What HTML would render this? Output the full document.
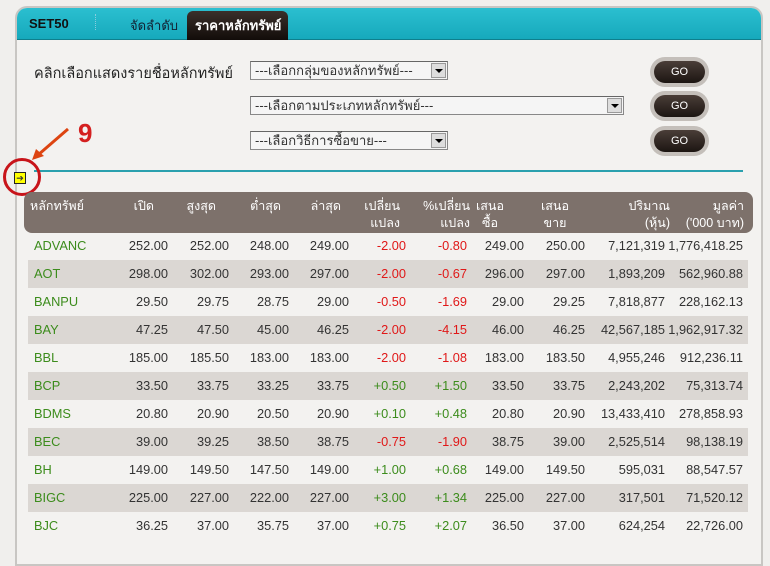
<!DOCTYPE html>
<html><head><meta charset="utf-8"><style>
*{margin:0;padding:0;box-sizing:border-box}
body{width:770px;height:543px;overflow:hidden;background:#f0efed;font-family:"Liberation Sans","Noto Sans CJK SC",sans-serif;position:relative;color:#333}
.panel{position:absolute;left:15px;top:6px;width:748px;height:560px;border:2px solid #c8c6c3;border-radius:12px 12px 0 0;background:#f3f2f0}
.hdr{position:absolute;left:17px;top:8px;width:744px;height:32px;background:linear-gradient(#2bbfd0,#16a9bc);border-radius:10px 10px 0 0;border-bottom:1px solid #0e7f8d}
.t{position:absolute;font-size:13px}
.sel{position:absolute;height:19px;border:1px solid #888;border-top-color:#666;background:#f5f5f5;font-size:13px;line-height:16px;color:#333;padding:1px 0 0 4px}
.sel i{position:absolute;right:1px;top:1px;width:15px;height:15px;background:#ddd;border:1px solid #999}
.sel i:after{content:"";position:absolute;left:3px;top:5px;border:4px solid transparent;border-top:4px solid #000}
.go{position:absolute;left:650px;width:59px;height:30px;border-radius:15px;background:#c4bfba;padding:4px}
.go div{width:51px;height:22px;border-radius:11px;background:linear-gradient(#4a3e38,#1c1512);color:#fff;font-size:11px;text-align:center;line-height:22px}
.th{position:absolute;left:24px;top:192px;width:729px;height:41px;background:#7d716b;border-radius:8px;color:#fff;font-size:12.5px}
.th span{position:absolute;top:6px;text-align:right;line-height:17px}
.row{position:absolute;left:28px;width:720px;height:28px;font-size:12.8px;line-height:28px}
.row.g{background:#dbd7d3}
.row span{position:absolute;text-align:right}
.n{color:#3c8c1c}.r{color:#e01818}.p{color:#3c8c1c}
</style></head><body>
<div class="panel"></div>
<div class="hdr"></div>
<div class="t" style="left:29px;top:16px;font-weight:bold;font-size:13px;color:#111">SET50</div>
<div style="position:absolute;left:95px;top:14px;height:16px;border-left:1px dotted #8cd"></div>
<div class="t" style="left:130px;top:15px;color:#123">จัดลำดับ</div>
<div style="position:absolute;left:187px;top:11px;width:101px;height:29px;background:linear-gradient(#3a302b,#120c09);border-radius:6px 6px 0 0"></div>
<div class="t" style="left:195px;top:15px;color:#fff;font-weight:bold">ราคาหลักทรัพย์</div>
<div class="t" style="left:34px;top:62px;font-size:14.5px;color:#222">คลิกเลือกแสดงรายชื่อหลักทรัพย์</div>
<div class="sel" style="left:250px;top:61px;width:198px">---เลือกกลุ่มของหลักทรัพย์---<i></i></div>
<div class="sel" style="left:250px;top:96px;width:374px">---เลือกตามประเภทหลักทรัพย์---<i></i></div>
<div class="sel" style="left:250px;top:131px;width:198px">---เลือกวิธีการซื้อขาย---<i></i></div>
<div class="go" style="top:57px"><div>GO</div></div>
<div class="go" style="top:91px"><div>GO</div></div>
<div class="go" style="top:126px"><div>GO</div></div>
<div style="position:absolute;left:34px;top:170px;width:709px;height:2px;background:#2aa0ae"></div>
<div style="position:absolute;left:14px;top:172px;width:12px;height:12px;background:#ff0;border:1px solid #222;font-size:9px;line-height:10px;text-align:center">➔</div>
<div style="position:absolute;left:3px;top:158px;width:38px;height:38px;border:3px solid #c8141a;border-radius:50%"></div>
<svg style="position:absolute;left:30px;top:125px" width="45" height="40"><line x1="38" y1="4" x2="8" y2="30" stroke="#d41" stroke-width="3"/><polygon points="2,35 6,24 14,31" fill="#d41"/></svg>
<div style="position:absolute;left:78px;top:118px;font-size:26px;color:#d42020;font-weight:bold">9</div>
<div class="th">
<span style="left:6px">หลักทรัพย์</span>
<span style="left:100px;width:30px">เปิด</span>
<span style="left:150px;width:42px">สูงสุด</span>
<span style="left:215px;width:42px">ต่ำสุด</span>
<span style="left:275px;width:42px">ล่าสุด</span>
<span style="left:320px;width:56px">เปลี่ยน<br>แปลง</span>
<span style="left:380px;width:66px">%เปลี่ยน<br>แปลง</span>
<span style="left:445px;width:42px;text-align:center">เสนอ<br>ซื้อ</span>
<span style="left:510px;width:42px;text-align:center">เสนอ<br>ขาย</span>
<span style="left:570px;width:76px">ปริมาณ<br>(หุ้น)</span>
<span style="left:640px;width:80px">มูลค่า<br>('000 บาท)</span>
</div>
<div id="rows"></div>
<script>
var d=[["ADVANC","252.00","252.00","248.00","249.00","-2.00","-0.80","249.00","250.00","7,121,319","1,776,418.25"],
["AOT","298.00","302.00","293.00","297.00","-2.00","-0.67","296.00","297.00","1,893,209","562,960.88"],
["BANPU","29.50","29.75","28.75","29.00","-0.50","-1.69","29.00","29.25","7,818,877","228,162.13"],
["BAY","47.25","47.50","45.00","46.25","-2.00","-4.15","46.00","46.25","42,567,185","1,962,917.32"],
["BBL","185.00","185.50","183.00","183.00","-2.00","-1.08","183.00","183.50","4,955,246","912,236.11"],
["BCP","33.50","33.75","33.25","33.75","+0.50","+1.50","33.50","33.75","2,243,202","75,313.74"],
["BDMS","20.80","20.90","20.50","20.90","+0.10","+0.48","20.80","20.90","13,433,410","278,858.93"],
["BEC","39.00","39.25","38.50","38.75","-0.75","-1.90","38.75","39.00","2,525,514","98,138.19"],
["BH","149.00","149.50","147.50","149.00","+1.00","+0.68","149.00","149.50","595,031","88,547.57"],
["BIGC","225.00","227.00","222.00","227.00","+3.00","+1.34","225.00","227.00","317,501","71,520.12"],
["BJC","36.25","37.00","35.75","37.00","+0.75","+2.07","36.50","37.00","624,254","22,726.00"]];
var R=[140,201,261,321,378,439,496,557,637,715];
var h="";d.forEach(function(r,i){h+='<div class="row'+(i%2?' g':'')+'" style="top:'+(232+i*28)+'px"><span class="n" style="left:6px">'+r[0]+'</span>';
for(var j=1;j<11;j++){var c=(j==5||j==6)?(r[j][0]=='-'?'r':'p'):'';h+='<span class="'+c+'" style="right:'+(720-R[j-1])+'px">'+r[j]+'</span>';}h+='</div>';});
document.getElementById('rows').innerHTML=h;
</script>
</body></html>
